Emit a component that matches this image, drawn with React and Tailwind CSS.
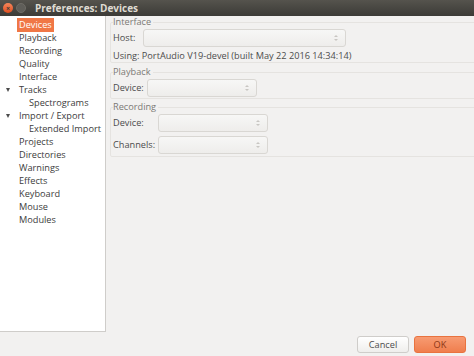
const items = [
  { label: "Devices", level: 0, selected: true },
  { label: "Playback", level: 0 },
  { label: "Recording", level: 0 },
  { label: "Quality", level: 0 },
  { label: "Interface", level: 0 },
  { label: "Tracks", level: 0, open: true },
  { label: "Spectrograms", level: 1 },
  { label: "Import / Export", level: 0, open: true },
  { label: "Extended Import", level: 1 },
  { label: "Projects", level: 0 },
  { label: "Directories", level: 0 },
  { label: "Warnings", level: 0 },
  { label: "Effects", level: 0 },
  { label: "Keyboard", level: 0 },
  { label: "Mouse", level: 0 },
  { label: "Modules", level: 0 },
];

const Combo = ({ className }) => (
  <div
    className={`h-[18px] rounded-[3px] border border-[#d9d7d3] bg-gradient-to-b from-[#f7f7f6] to-[#eeedeb] flex items-center justify-end pr-[7px] ${className}`}
  >
    <div className="flex flex-col items-center gap-[2px]">
      <div className="w-0 h-0 border-x-[2px] border-x-transparent border-b-[2px] border-b-[#c8c6c2]" />
      <div className="w-0 h-0 border-x-[2px] border-x-transparent border-t-[2px] border-t-[#c8c6c2]" />
    </div>
  </div>
);

const Group = ({ title, children, className }) => (
  <fieldset className={`border border-[#e5e3e0] rounded-[2px] pl-[2px] w-[366px] ${className}`}>
    <legend className="h-[12px] leading-[12px] text-[#7b7975] pr-[2px]">{title}</legend>
    {children}
  </fieldset>
);

const Row = ({ label, labelWidth, children, className }) => (
  <div className={`flex items-center ${className}`}>
    <span className={`text-[#4c4c4c] shrink-0 ${labelWidth}`}>{label}</span>
    {children}
  </div>
);

export default function App() {
  return (
    <div
      className="w-[474px] h-[356px] flex flex-col bg-[#f2f1f0] text-[9.2px] text-[#3c3c3c] overflow-hidden"
      style={{ fontFamily: '"Open Sans", "Noto Sans", sans-serif' }}
    >
      <div className="h-[16px] shrink-0 bg-gradient-to-b from-[#55534d] to-[#3c3b37] flex items-center">
        <div className="ml-[3px] w-[10px] h-[10px] rounded-full bg-gradient-to-b from-[#f5855a] to-[#df4d1c] flex items-center justify-center text-[#3c3b37] text-[7px] font-bold leading-none">
          ×
        </div>
        <div className="ml-[3px] w-[10px] h-[10px] rounded-full bg-[#5f5e59] border border-[#6e6c66]" />
        <div className="ml-[9px] text-[#dfdbd2] font-bold text-[10px] leading-none">
          Preferences: Devices
        </div>
      </div>

      <div className="flex flex-1 min-h-0">
        <div className="w-[106px] h-[316px] shrink-0 bg-white border-r border-b border-[#cfcdca] pt-[2px]">
          {items.map((it) => (
            <div key={it.label} className="h-[13px] flex items-center relative whitespace-nowrap">
              {it.open && (
                <div className="absolute left-[6px] top-[5px] w-0 h-0 border-x-[2.5px] border-x-transparent border-t-[4px] border-t-[#4c4c4c]" />
              )}
              <span
                className={`${it.level ? "ml-[27px]" : "ml-[17px]"} px-[2px] leading-[14px] ${
                  it.selected ? "bg-[#f07746] text-white" : ""
                }`}
              >
                {it.label}
              </span>
            </div>
          ))}
        </div>

        <div className="flex-1 pl-[4px]">
          <Group title="Interface" className="h-[47px]">
            <Row label="Host:" labelWidth="w-[30px]" className="mt-[1px]">
              <Combo className="w-[203px]" />
            </Row>
            <div className="mt-[3px] text-[#4c4c4c] leading-[12px] whitespace-nowrap">
              Using: PortAudio V19-devel (built May 22 2016 14:34:14)
            </div>
          </Group>
          <Group title="Playback" className="mt-[3px] h-[33px]">
            <Row label="Device:" labelWidth="w-[34px]" className="mt-[1px]">
              <Combo className="w-[110px]" />
            </Row>
          </Group>
          <Group title="Recording" className="mt-[2px] h-[56px]">
            <Row label="Device:" labelWidth="w-[45px]" className="mt-[1px]">
              <Combo className="w-[110px]" />
            </Row>
            <Row label="Channels:" labelWidth="w-[45px]" className="mt-[4px]">
              <Combo className="w-[110px]" />
            </Row>
          </Group>
        </div>
      </div>

      <div className="h-[24px] shrink-0 flex justify-end items-start gap-[5px] pr-[8px] pt-[4px]">
        <button className="w-[52px] h-[17px] rounded-[3px] border border-[#cfcdca] bg-gradient-to-b from-white to-[#efeeec] text-[#4c4c4c] leading-none">
          Cancel
        </button>
        <button className="w-[52px] h-[17px] rounded-[3px] border border-[#e9733f] bg-gradient-to-b from-[#f79b72] to-[#f07e4d] text-[#8b3514] leading-none">
          OK
        </button>
      </div>
    </div>
  );
}
